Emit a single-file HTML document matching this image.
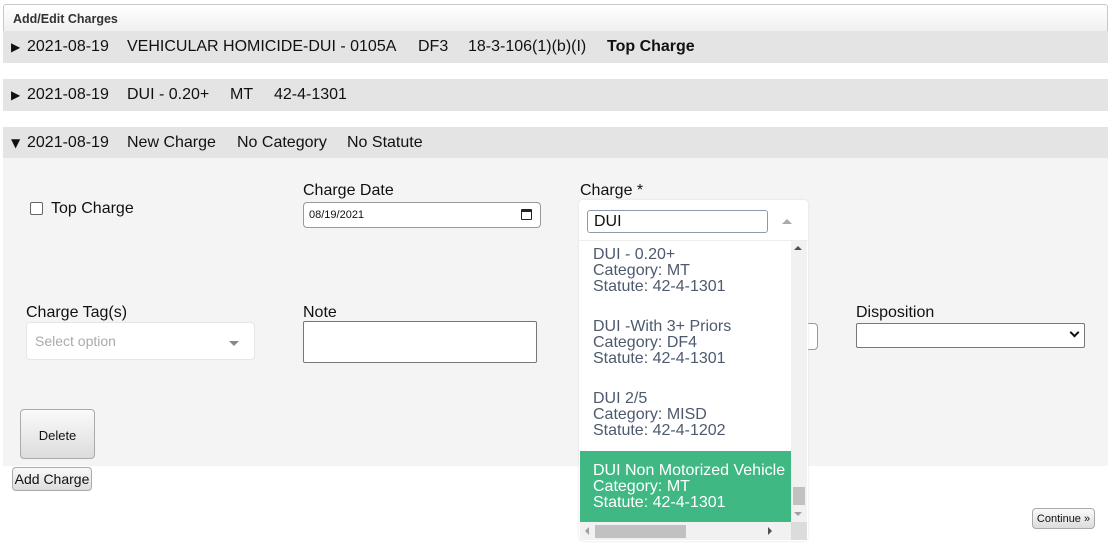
<!DOCTYPE html>
<html><head><meta charset="utf-8"><style>
*{box-sizing:border-box}
body{margin:0;width:1114px;height:546px;background:#fff;font-family:"Liberation Sans",Arial,sans-serif;position:relative;overflow:hidden;color:#111}
.a{position:absolute}
.hdr{left:3px;top:4px;width:1105px;height:27px;border:1px solid #c8c8c8;border-bottom:none;border-radius:3px 3px 0 0;background:linear-gradient(#fff,#f0f0f0);font-size:12.5px;font-weight:bold;color:#333;padding:7px 0 0 9px}
.row{left:3px;width:1105px;height:32px;background:#e4e4e4;font-size:16px;white-space:pre}
.row span{position:absolute;top:7px}
.tri{font-family:"DejaVu Sans",sans-serif;font-size:12px;top:9px !important}
.panel{left:3px;top:158px;width:1105px;height:308px;background:#f4f4f4}
.lbl{font-size:16px}
.btn{border:1px solid #aaa;border-radius:4px;background:linear-gradient(#fafafa,#dcdcdc);font-size:13px;text-align:center}
.opt{left:593px;font-size:16px;color:#4d5a6e;line-height:16px}
</style></head><body>
<div class="a hdr">Add/Edit Charges</div>
<div class="a row" style="top:31px"><span class="tri" style="left:8px">▶</span><span style="left:24px">2021-08-19</span><span style="left:124px">VEHICULAR HOMICIDE-DUI - 0105A</span><span style="left:415px">DF3</span><span style="left:465px">18-3-106(1)(b)(I)</span><span style="left:604px"><b>Top Charge</b></span></div>
<div class="a row" style="top:79px"><span class="tri" style="left:8px">▶</span><span style="left:24px">2021-08-19</span><span style="left:124px">DUI - 0.20+</span><span style="left:227px">MT</span><span style="left:271px">42-4-1301</span></div>
<div class="a row" style="top:127px"><span class="tri" style="left:8px">▼</span><span style="left:24px">2021-08-19</span><span style="left:124px">New Charge</span><span style="left:234px">No Category</span><span style="left:344px">No Statute</span></div>
<div class="a panel"></div>
<div class="a" style="left:30px;top:202px;width:13px;height:13px;border:1px solid #666;border-radius:2px;background:#fff"></div>
<div class="a lbl" style="left:51px;top:200px">Top Charge</div>
<div class="a lbl" style="left:303px;top:182px">Charge Date</div>
<div class="a" style="left:303px;top:202px;width:238px;height:26px;border:1px solid #999;border-radius:4px;background:#fff;font-size:11px;padding:6px 0 0 5px">08/19/2021<span style="position:absolute;right:8px;top:6px;width:11px;height:11px;border:1.5px solid #222;border-top-width:3px;border-radius:1px"></span></div>
<div class="a lbl" style="left:580px;top:182px">Charge *</div>
<div class="a lbl" style="left:26px;top:304px">Charge Tag(s)</div>
<div class="a" style="left:26px;top:322px;width:229px;height:38px;border:1px solid #e6e6e6;border-radius:4px;background:#fff;font-size:14px;color:#aaa;padding:10px 0 0 8px">Select option<span style="position:absolute;right:15px;top:18px;border:5px solid transparent;border-top-color:#888"></span></div>
<div class="a lbl" style="left:303px;top:304px">Note</div>
<div class="a" style="left:303px;top:321px;width:234px;height:42px;border:1px solid #777;border-radius:2px;background:#fff"></div>
<div class="a" style="left:800px;top:323px;width:18px;height:27px;border:1px solid #999;border-radius:4px;background:#fff"></div>
<div class="a lbl" style="left:856px;top:304px">Disposition</div>
<div class="a" style="left:856px;top:323px;width:229px;height:25px;border:1px solid #777;border-radius:2px;background:#fff"><span style="position:absolute;right:6px;top:5px;width:7px;height:7px;border:solid #111;border-width:0 2px 2px 0;transform:rotate(45deg)"></span></div>
<div class="a btn" style="left:20px;top:409px;width:75px;height:50px;padding-top:18px">Delete</div>
<div class="a btn" style="left:12px;top:467px;width:80px;height:24px;font-size:14px;padding-top:3px">Add Charge</div>
<div class="a btn" style="left:1032px;top:508px;width:63px;height:21px;font-size:11px;padding-top:4px">Continue »</div>
<div class="a" style="left:579px;top:200px;width:229px;height:341px;background:#fff;border-radius:4px;box-shadow:0 0 2px #ddd"></div>
<div class="a" style="left:587px;top:210px;width:181px;height:23px;border:1px solid #8a9bb0;border-radius:3px;font-size:16px;padding:2px 0 0 6px">DUI</div>
<div class="a" style="left:782px;top:214px;border:5px solid transparent;border-bottom-color:#aaa"></div>
<div class="a" style="left:579px;top:240px;width:229px;height:1px;background:#eee"></div>
<div class="a opt" style="top:247px">DUI - 0.20+<br>Category: MT<br>Statute: 42-4-1301</div>
<div class="a opt" style="top:319px">DUI -With 3+ Priors<br>Category: DF4<br>Statute: 42-4-1301</div>
<div class="a opt" style="top:391px">DUI 2/5<br>Category: MISD<br>Statute: 42-4-1202</div>
<div class="a" style="left:580px;top:451px;width:211px;height:71px;background:#3fb883"></div>
<div class="a opt" style="top:463px;color:#fff;white-space:nowrap;width:198px;overflow:hidden">DUI Non Motorized Vehicle<br>Category: MT<br>Statute: 42-4-1301</div>
<div class="a" style="left:791px;top:241px;width:16px;height:281px;background:#f1f1f1"></div>
<div class="a" style="left:794px;top:246px;border:4px solid transparent;border-bottom-color:#505050;border-top:none"></div>
<div class="a" style="left:793px;top:487px;width:12px;height:18px;background:#c1c1c1"></div>
<div class="a" style="left:794px;top:512px;border:4px solid transparent;border-top-color:#a0a0a0;border-bottom:none"></div>
<div class="a" style="left:580px;top:522px;width:227px;height:18px;background:#f1f1f1"></div>
<div class="a" style="left:595px;top:525px;width:91px;height:13px;background:#c1c1c1"></div>
<div class="a" style="left:585px;top:527px;border:4px solid transparent;border-right-color:#a0a0a0;border-left:none"></div>
<div class="a" style="left:768px;top:527px;border:4px solid transparent;border-left-color:#505050;border-right:none"></div>
<div class="a" style="left:791px;top:522px;width:16px;height:18px;background:#dcdcdc"></div>
</body></html>
